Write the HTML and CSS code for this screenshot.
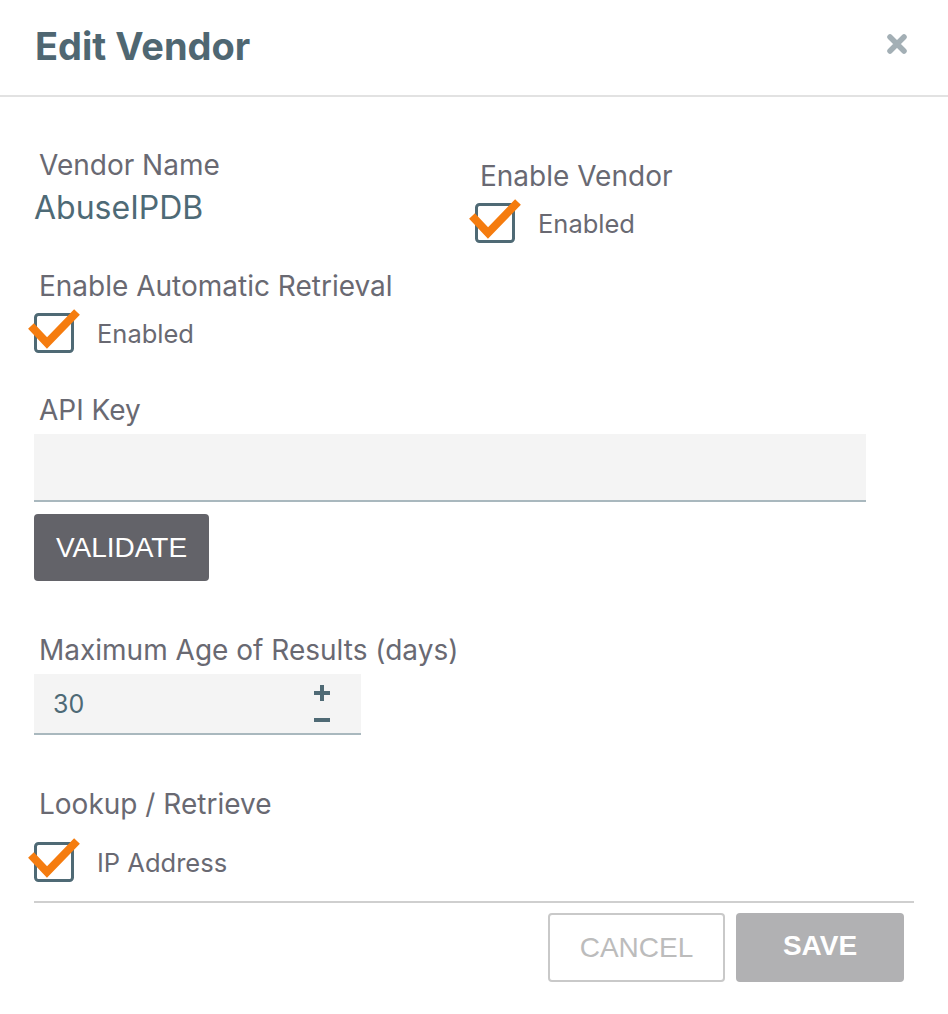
FILE: index.html
```html
<!DOCTYPE html>
<html lang="en">
<head>
    <meta charset="UTF-8">
    <meta name="viewport" content="width=device-width, initial-scale=1.0">
    <title>Edit Vendor</title>
    <link rel="stylesheet" href="styles.css">
</head>
<body>
    <div class="dialog">
        <div class="header">
            <h1>Edit Vendor</h1>
            <span class="close">
                <svg width="22" height="22" viewBox="0 0 22 22"><path d="M4 4 L18 18 M18 4 L4 18" stroke="#a3afb5" stroke-width="5.5" stroke-linecap="round"/></svg>
            </span>
        </div><!--header-->

        <div class="content">
            <div class="row">
                <div class="field">
                    <div class="label">Vendor Name</div>
                    <div class="value">AbuseIPDB</div>
                </div>
                <div class="field field-right">
                    <div class="label">Enable Vendor</div>
                    <label class="check">
                        <svg class="box" width="40" height="40" viewBox="0 0 40 40"><rect x="1.5" y="1.5" width="37" height="37" rx="3" fill="none" stroke="#4f6a75" stroke-width="3"/><polyline points="-3,13 13,30 43,-1" fill="none" stroke="#f57c0f" stroke-width="8"/></svg>
                        <span>Enabled</span>
                    </label>
                </div>
            </div>

            <div class="field auto">
                <div class="label">Enable Automatic Retrieval</div>
                <label class="check">
                    <svg class="box" width="40" height="40" viewBox="0 0 40 40"><rect x="1.5" y="1.5" width="37" height="37" rx="3" fill="none" stroke="#4f6a75" stroke-width="3"/><polyline points="-3,13 13,30 43,-1" fill="none" stroke="#f57c0f" stroke-width="8"/></svg>
                    <span>Enabled</span>
                </label>
            </div>

            <div class="field api">
                <div class="label">API Key</div>
                <input class="text-input" type="text">
                <button class="validate">VALIDATE</button>
            </div>

            <div class="field age">
                <div class="label">Maximum Age of Results (days)</div>
                <div class="number">
                    <span>30</span>
                    <span class="steps">
                        <svg width="22" height="40" viewBox="0 0 22 40"><path d="M11 1 V17 M3 9 H19 M3 36 H19" stroke="#4f6a75" stroke-width="4"/></svg>
                    </span>
                </div>
            </div>

            <div class="field lookup">
                <div class="label">Lookup / Retrieve</div>
                <label class="check">
                    <svg class="box" width="40" height="40" viewBox="0 0 40 40"><rect x="1.5" y="1.5" width="37" height="37" rx="3" fill="none" stroke="#4f6a75" stroke-width="3"/><polyline points="-3,13 13,30 43,-1" fill="none" stroke="#f57c0f" stroke-width="8"/></svg>
                    <span>IP Address</span>
                </label>
            </div>

            <div class="footer">
                <button class="cancel">CANCEL</button>
                <button class="save">SAVE</button>
            </div>
        </div><!--content-->
    </div><!--dialog-->
</body>
</html>
```

FILE: styles.css
```css
body{
    margin: 0;
    background: #fff;
    font-family: Inter, "Noto Sans", sans-serif;
}

.header{
    height: 95px;
    border-bottom: 2px solid #e2e2e2;
    display: flex;
    align-items: center;
    justify-content: space-between;
    padding: 0 40px 0 35px;
}

h1{
    margin: 0 0 4px 0;
    font-size: 38px;
    font-weight: 700;
    color: #4f6772;
}

.close{
    display: flex;
    margin-bottom: 8px;
}

.content{
    padding: 52px 34px 0 34px;
}

.row{
    display: grid;
    grid-template-columns: 441px 1fr;
}

.label{
    padding-left: 5px;
    font-size: 28px;
    line-height: 32px;
    color: #696972;
}

.value{
    margin-top: 9px;
    font-size: 32px;
    line-height: 36px;
    color: #4e6a76;
}

.field-right{
    padding-top: 11px;
}

.check{
    display: flex;
    align-items: center;
    gap: 23px;
    margin-top: 11px;
    font-size: 25.5px;
    color: #696972;
}

.box{
    overflow: visible;
    flex: none;
}

.auto{
    margin-top: 27px;
}

.api{
    margin-top: 41px;
}

.text-input{
    display: block;
    box-sizing: border-box;
    width: 832px;
    height: 68px;
    margin-top: 8px;
    border: none;
    border-bottom: 2px solid #a9b8be;
    background: #f4f4f4;
}

.validate{
    display: block;
    margin-top: 12px;
    width: 175px;
    height: 67px;
    border: none;
    border-radius: 4px;
    background: #636369;
    color: #fff;
    font-family: "Liberation Sans", Arial, sans-serif;
    font-size: 28px;
}

.age{
    margin-top: 53px;
}

.number{
    box-sizing: border-box;
    width: 327px;
    height: 61px;
    margin-top: 8px;
    padding: 0 28px 0 19px;
    display: flex;
    align-items: center;
    justify-content: space-between;
    background: #f4f4f4;
    border-bottom: 2px solid #a9b8be;
    font-size: 25px;
    color: #4e6a76;
}

.steps{
    display: flex;
}

.lookup{
    margin-top: 53px;
}

.lookup .check{
    margin-top: 22px;
}

.footer{
    margin-top: 19px;
    border-top: 2px solid #cfcfcf;
    padding: 10px 10px 0 0;
    display: flex;
    justify-content: flex-end;
    gap: 11px;
}

.footer button{
    height: 69px;
    border-radius: 4px;
    font-family: "Liberation Sans", Arial, sans-serif;
    font-size: 28px;
}

.cancel{
    width: 177px;
    background: #fff;
    border: 2px solid #c9c9c9;
    color: #bcbcbc;
}

.save{
    width: 168px;
    background: #b1b1b3;
    border: none;
    color: #fff;
    font-weight: bold;
    padding-bottom: 4px;
}
```
